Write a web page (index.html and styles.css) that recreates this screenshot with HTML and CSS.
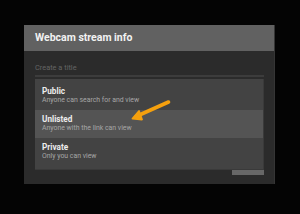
FILE: index.html
```html
<!DOCTYPE html>
<html lang="en">

<head>
    <meta charset="UTF-8">
    <meta name="viewport" content="width=device-width, initial-scale=1.0">
    <title>Webcam stream info</title>
    <link rel="stylesheet" href="styles.css">
</head>

<body>
    <div class="dialog">
        <div class="dialog_header">Webcam stream info</div>
        <div class="dialog_body">
            <div class="title_input">Create a title</div>
            <div class="privacy_list">
                <div class="privacy_item">
                    <div class="item_name">Public</div>
                    <div class="item_desc">Anyone can search for and view</div>
                </div>
                <div class="privacy_item selected">
                    <div class="item_name">Unlisted</div>
                    <div class="item_desc">Anyone with the link can view</div>
                </div>
                <div class="privacy_item">
                    <div class="item_name">Private</div>
                    <div class="item_desc">Only you can view</div>
                </div>
            </div>
            <div class="button_row">
                <div class="btn_stub"></div>
            </div>
        </div>
        <!-- pointer arrow drawn over the list -->
        <svg class="arrow" width="300" height="214" viewBox="0 0 300 214">
            <path d="M168.5 102 L136 116.5" stroke="#f5a00e" stroke-width="3.6" stroke-linecap="round" fill="none"/>
            <path d="M132.5 118.5 L139 111 L142 119.5 Z" fill="#f5a00e" stroke="#f5a00e" stroke-width="1.8" stroke-linejoin="round"/>
        </svg>
    </div>
</body>

</html>
```
FILE: styles.css
```css
* {
    box-sizing: border-box;
}

body {
    margin: 0;
    width: 300px;
    height: 214px;
    background: #040404;
    font-family: Roboto, 'Liberation Sans', Arial, sans-serif;
    overflow: hidden;
}

.dialog {
    margin: 25px 0 0 24px;
    width: 251px;
    height: 159px;
    background: #2b2b2b;
    border-right: 1px solid #353535;
}

.dialog_header {
    height: 26px;
    background: #616161;
    color: #f2f2f2;
    font-size: 10.5px;
    font-weight: bold;
    line-height: 26px;
    padding-left: 11px;
}

.dialog_body {
    padding: 0 10px 0 11px;
}

.title_input {
    height: 26px;
    padding-top: 12px;
    color: #646464;
    font-size: 7.4px;
    line-height: 10px;
    border-bottom: 2px solid #3c3c3c;
}

.privacy_list {
    margin-top: 2px;
    background: #434343;
    padding: 3px 0;
    border-right: 1px solid #3a3a3a;
    border-bottom: 1px solid #3a3a3a;
}

.privacy_item {
    height: 28px;
    padding: 5px 0 0 7px;
}

.privacy_item.selected {
    background: #545454;
}

.item_name {
    color: #ececec;
    font-size: 8.2px;
    font-weight: bold;
    line-height: 9px;
}

.item_desc {
    color: #a6a6a6;
    font-size: 6.9px;
    line-height: 9px;
}

.button_row {
    display: flex;
    justify-content: flex-end;
}

.btn_stub {
    width: 32px;
    height: 5px;
    background: #676767;
}

.arrow {
    position: absolute;
    left: 0;
    top: 0;
}
```
